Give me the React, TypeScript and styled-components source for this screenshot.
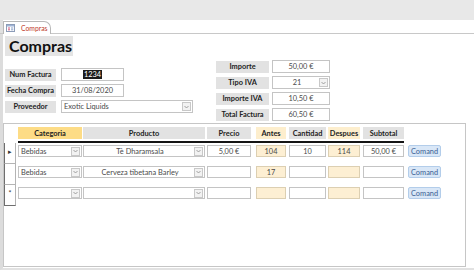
import React from "react";
import styled, { createGlobalStyle } from "styled-components";

const Global = createGlobalStyle`
  html, body { margin: 0; padding: 0; background: #ffffff; }
  body { font-family: Lato, "Open Sans", sans-serif; }
`;

const Page = styled.div`
  width: 474px;
  height: 270px;
  overflow: hidden;
  display: flex;
  flex-direction: column;
  background: #ffffff;
`;

const TopBar = styled.div`
  height: 20px;
  background: #e8e8e8;
  flex: none;
`;

const TabStrip = styled.div`
  height: 13px;
  flex: none;
  display: flex;
  align-items: flex-end;
  padding-left: 3px;
  background: linear-gradient(to right, #e0e0e0 0 3px, #ffffff 3px);
  border-bottom: 1px solid #c8c8c8;
`;

const Tab = styled.div`
  height: 13px;
  width: 48px;
  box-sizing: border-box;
  display: flex;
  align-items: center;
  gap: 6px;
  padding-left: 2px;
  border: 1px solid #b8b8b8;
  border-bottom: none;
  border-top-right-radius: 7px;
  background: #ffffff;
  margin-bottom: -1px;
  font-size: 6.8px;
  color: #c0392b;
`;

const Doc = styled.div`
  flex: 1;
  display: flex;
  flex-direction: column;
  border-left: 3px solid #dcdcdc;
  border-bottom: 2px solid #e2e2e2;
`;

const Title = styled.div`
  margin: 2px 0 0 2px;
  width: 68px;
  height: 20px;
  box-sizing: border-box;
  background: #e4e4e4;
  font-size: 16px;
  font-weight: 700;
  color: #111;
  line-height: 20px;
  padding-left: 4px;
`;

const FormArea = styled.div`
  display: flex;
  align-items: flex-start;
`;

const FieldBlock = styled.div<{ $mt: number; $ml: number; $gap: number }>`
  display: flex;
  flex-direction: column;
  gap: ${(p) => p.$gap}px;
  margin-top: ${(p) => p.$mt}px;
  margin-left: ${(p) => p.$ml}px;
`;

const FieldRow = styled.div<{ $gap: number }>`
  display: flex;
  align-items: center;
  gap: ${(p) => p.$gap}px;
`;

const Label = styled.div<{ $w: number }>`
  width: ${(p) => p.$w}px;
  height: 12px;
  background: #e2e2e2;
  font-size: 7.4px;
  font-weight: 700;
  color: #222;
  display: flex;
  align-items: center;
  justify-content: center;
  white-space: nowrap;
`;

const Box = styled.div<{ $w: number; $h?: number; $align?: string; $bg?: string; $bd?: string }>`
  width: ${(p) => p.$w}px;
  height: ${(p) => p.$h ?? 13}px;
  box-sizing: border-box;
  border: 1px solid ${(p) => p.$bd ?? "#c4c4c4"};
  background: ${(p) => p.$bg ?? "#ffffff"};
  display: flex;
  align-items: center;
  justify-content: ${(p) => p.$align ?? "center"};
  padding: 0 2px;
  font-size: 7.4px;
  color: #4a4a4a;
  white-space: nowrap;
  overflow: hidden;
  position: relative;
`;

const BoxText = styled.span<{ $center?: boolean }>`
  flex: 1;
  text-align: ${(p) => (p.$center ? "center" : "left")};
`;

const Selected = styled.span`
  background: #1c1c1c;
  color: #ffffff;
  padding: 0 1px;
`;

const DropBtn = styled.div`
  width: 9px;
  height: 9px;
  box-sizing: border-box;
  border: 1px solid #c8c8c8;
  background: #f2f2f2;
  flex: none;
  display: flex;
  align-items: center;
  justify-content: center;
  margin-right: -1px;
`;

const Sub = styled.div`
  margin: 2px 0 0 0;
  width: 463px;
  height: 144px;
  box-sizing: border-box;
  border: 1px solid #c6c6c6;
  padding-top: 3px;
  display: flex;
  flex-direction: column;
`;

const HeaderRow = styled.div`
  display: flex;
  margin-left: 14px;
  width: 386px;
  padding-bottom: 2px;
  border-bottom: 2px solid #151515;
`;

const HeadCell = styled.div<{ $w: number; $ml: number; $bg: string }>`
  width: ${(p) => p.$w}px;
  margin-left: ${(p) => p.$ml}px;
  height: 12px;
  background: ${(p) => p.$bg};
  font-size: 7.4px;
  font-weight: 700;
  color: #222;
  display: flex;
  align-items: center;
  justify-content: center;
  flex: none;
`;

const Records = styled.div`
  display: flex;
  flex-direction: column;
`;

const RecordRow = styled.div`
  display: flex;
  align-items: flex-start;
  height: 21px;
`;

const Selector = styled.div<{ $last?: boolean }>`
  width: 12px;
  height: 21px;
  box-sizing: border-box;
  border-left: 1px solid #6e6e6e;
  border-right: 1px solid #b4b4b4;
  border-bottom: 1px solid ${(p) => (p.$last ? "#6e6e6e" : "#b4b4b4")};
  flex: none;
  display: flex;
  justify-content: center;
  padding-top: 4px;
  font-size: 7px;
  color: #333;
  line-height: 8px;
`;

const CellWrap = styled.div<{ $w: number; $ml: number }>`
  width: ${(p) => p.$w}px;
  margin-left: ${(p) => p.$ml}px;
  margin-top: 2px;
  flex: none;
  display: flex;
`;

const CmdBtn = styled.div`
  height: 12px;
  box-sizing: border-box;
  padding: 0 2px;
  border: 1px solid #b3cdea;
  border-radius: 2px;
  background: #d9e7f7;
  color: #3a5f93;
  font-size: 7.4px;
  display: flex;
  align-items: center;
`;

const Chevron = () => (
  <svg width="5" height="4" viewBox="0 0 5 4">
    <path d="M0.5 1 L2.5 3 L4.5 1" fill="none" stroke="#8a8a8a" strokeWidth="0.8" />
  </svg>
);

const FormIcon = () => (
  <svg width="9" height="8" viewBox="0 0 9 8">
    <rect x="0.5" y="0.5" width="8" height="7" fill="#fff" stroke="#8c9cb8" strokeWidth="1" />
    <rect x="1" y="1" width="7" height="1.5" fill="#9fb4d6" />
    <rect x="2" y="3.5" width="2" height="1" fill="#d0587a" />
    <rect x="2" y="5.3" width="2" height="1" fill="#d0587a" />
    <rect x="5" y="3.5" width="2.3" height="1" fill="#8aa0c8" />
    <rect x="5" y="5.3" width="2.3" height="1" fill="#8aa0c8" />
  </svg>
);

type ColKey = "cat" | "prod" | "precio" | "antes" | "cant" | "desp" | "sub" | "cmd";
type Col = { key: ColKey; title: string; w: number; ml: number; head: string; cell: string; bd: string; align: string; combo?: boolean };

const YEL = "#fddc86";
const PALE = "#fdeecd";
const GRAY = "#e2e2e2";

const cols: Col[] = [
  { key: "cat", title: "Categoria", w: 64, ml: 0, head: YEL, cell: "#fff", bd: "#c4c4c4", align: "flex-start", combo: true },
  { key: "prod", title: "Producto", w: 122, ml: 1, head: GRAY, cell: "#fff", bd: "#c4c4c4", align: "center", combo: true },
  { key: "precio", title: "Precio", w: 44, ml: 2, head: GRAY, cell: "#fff", bd: "#c4c4c4", align: "center" },
  { key: "antes", title: "Antes", w: 30, ml: 5, head: PALE, cell: "#fdefd3", bd: "#dccfb2", align: "center" },
  { key: "cant", title: "Cantidad", w: 37, ml: 3, head: GRAY, cell: "#fff", bd: "#c4c4c4", align: "center" },
  { key: "desp", title: "Despues", w: 32, ml: 2, head: PALE, cell: "#fdefd3", bd: "#dccfb2", align: "center" },
  { key: "sub", title: "Subtotal", w: 41, ml: 3, head: GRAY, cell: "#fff", bd: "#c4c4c4", align: "center" },
  { key: "cmd", title: "", w: 33, ml: 4, head: "transparent", cell: "#fff", bd: "#c4c4c4", align: "center" },
];

type Rec = Partial<Record<ColKey, string>>;
const records: { mark: string; data: Rec }[] = [
  { mark: "▸", data: { cat: "Bebidas", prod: "Tè Dharamsala", precio: "5,00 €", antes: "104", cant: "10", desp: "114", sub: "50,00 €" } },
  { mark: "", data: { cat: "Bebidas", prod: "Cerveza tibetana Barley", antes: "17" } },
  { mark: "*", data: {} },
];

const leftFields = [
  { label: "Num Factura", w: 63, value: <Selected>1234</Selected> },
  { label: "Fecha Compra", w: 63, value: "31/08/2020" },
  { label: "Proveedor", w: 132, value: "Exotic Liquids", combo: true, align: "flex-start" },
];

const rightFields = [
  { label: "Importe", value: "50,00 €" },
  { label: "Tipo IVA", value: "21", combo: true },
  { label: "Importe IVA", value: "10,50 €" },
  { label: "Total Factura", value: "60,50 €" },
];

export default function App() {
  return (
    <Page>
      <Global />
      <TopBar />
      <TabStrip>
        <Tab>
          <FormIcon />
          <span>Compras</span>
        </Tab>
      </TabStrip>
      <Doc>
        <Title>Compras</Title>
        <FormArea>
          <FieldBlock $mt={12} $ml={2} $gap={3}>
            {leftFields.map((f) => (
              <FieldRow key={f.label} $gap={5}>
                <Label $w={51}>{f.label}</Label>
                <Box $w={f.w} $align={f.align ?? "center"}>
                  {f.combo ? (
                    <>
                      <BoxText>{f.value}</BoxText>
                      <DropBtn>
                        <Chevron />
                      </DropBtn>
                    </>
                  ) : (
                    f.value
                  )}
                </Box>
              </FieldRow>
            ))}
          </FieldBlock>
          <FieldBlock $mt={4} $ml={23} $gap={3}>
            {rightFields.map((f) => (
              <FieldRow key={f.label} $gap={3}>
                <Label $w={53}>{f.label}</Label>
                <Box $w={58}>
                  {f.combo ? (
                    <>
                      <BoxText $center>{f.value}</BoxText>
                      <DropBtn>
                        <Chevron />
                      </DropBtn>
                    </>
                  ) : (
                    f.value
                  )}
                </Box>
              </FieldRow>
            ))}
          </FieldBlock>
        </FormArea>
        <Sub>
          <HeaderRow>
            {cols
              .filter((c) => c.key !== "cmd")
              .map((c) => (
                <HeadCell key={c.key} $w={c.w} $ml={c.ml} $bg={c.head}>
                  {c.title}
                </HeadCell>
              ))}
          </HeaderRow>
          <Records>
            {records.map((r, i) => (
              <RecordRow key={i}>
                <Selector $last={i === records.length - 1}>{r.mark}</Selector>
                {cols.map((c, ci) => (
                  <CellWrap key={c.key} $w={c.w} $ml={ci === 0 ? 2 : c.ml}>
                    {c.key === "cmd" ? (
                      <CmdBtn>Comand</CmdBtn>
                    ) : (
                      <Box $w={c.w} $h={12} $bg={c.cell} $bd={c.bd} $align={c.align}>
                        {c.combo ? (
                          <>
                            <BoxText $center={c.align === "center"}>{r.data[c.key] ?? ""}</BoxText>
                            <DropBtn>
                              <Chevron />
                            </DropBtn>
                          </>
                        ) : (
                          r.data[c.key] ?? ""
                        )}
                      </Box>
                    )}
                  </CellWrap>
                ))}
              </RecordRow>
            ))}
          </Records>
        </Sub>
      </Doc>
    </Page>
  );
}
